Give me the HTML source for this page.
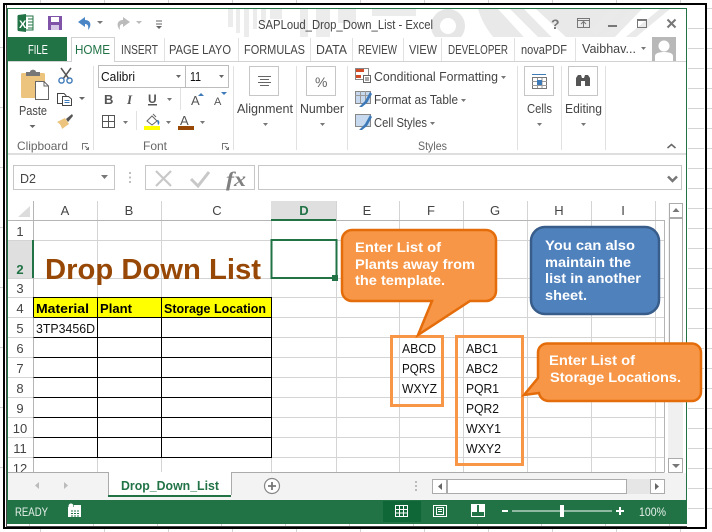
<!DOCTYPE html>
<html><head><meta charset="utf-8"><title>SAPLoud_Drop_Down_List - Excel</title>
<style>
html,body{margin:0;padding:0;background:#fff;width:712px;height:532px;overflow:hidden}
svg{display:block;position:absolute;left:0;top:0}
text{font-family:"Liberation Sans",sans-serif;white-space:pre}
.t{font-size:12.5px;fill:#444}
.r{font-size:12.5px;fill:#444}
.g{font-size:12px;fill:#666}
.c{font-size:13px;fill:#111}
.b{font-size:13px;font-weight:bold;fill:#000}
.h{font-size:13px;fill:#444;text-anchor:middle}
.w{font-size:14px;font-weight:bold;fill:#fff}
</style></head><body>
<svg width="712" height="532" viewBox="0 0 712 532" xmlns="http://www.w3.org/2000/svg" shape-rendering="geometricPrecision">
<rect width="712" height="532" fill="#fff"/>
<!-- background sheet gridlines -->
<g stroke="#d4d4d4" stroke-width="1">
<path d="M40.5 0V3M104.5 0V3M168.5 0V3M232.5 0V3M296.5 0V3M360.5 0V3M424.5 0V3M488.5 0V3M552.5 0V3M616.5 0V3M680.5 0V3"/>
<path d="M40.5 529V532M104.5 529V532M168.5 529V532M232.5 529V532M296.5 529V532M360.5 529V532M424.5 529V532M488.5 529V532M552.5 529V532M616.5 529V532M680.5 529V532"/>
<path d="M29.5 523V527M93.5 523V527M157.5 523V527M221.5 523V527M285.5 523V527M349.5 523V527M413.5 523V527M477.5 523V527M541.5 523V527M605.5 523V527M669.5 523V527"/>
<path d="M688 28.5H704M688 48.5H704M688 68.5H704M688 88.5H704M688 108.5H704M688 128.5H704M688 148.5H704M688 168.5H704M688 188.5H704M688 208.5H704M688 228.5H704M688 248.5H704M688 268.5H704M688 288.5H704M688 308.5H704M688 328.5H704M688 348.5H704M688 368.5H704M688 388.5H704M688 408.5H704M688 428.5H704M688 448.5H704M688 468.5H704M688 488.5H704M688 508.5H704"/>
<path d="M707 8.5H712M707 28.5H712M707 48.5H712M707 68.5H712M707 88.5H712M707 108.5H712M707 128.5H712M707 148.5H712M707 168.5H712M707 188.5H712M707 208.5H712M707 228.5H712M707 248.5H712M707 268.5H712M707 288.5H712M707 308.5H712M707 328.5H712M707 348.5H712M707 368.5H712M707 388.5H712M707 408.5H712M707 428.5H712M707 448.5H712M707 468.5H712M707 488.5H712M707 508.5H712"/>
<path d="M0 47.5H3M0 107.5H3M0 167.5H3M0 227.5H3M0 287.5H3M0 347.5H3M0 407.5H3M0 467.5H3"/>
</g>
<!-- black frame -->
<rect x="4" y="4" width="702" height="524" fill="none" stroke="#000" stroke-width="2"/>
<path d="M706.5 4V529M4 528.5H707" stroke="#000" stroke-width="1" fill="none"/>
<path d="M6.5 5V526.5H687" stroke="#444" stroke-width="1" fill="none"/>
<!-- window -->
<rect x="7.5" y="8.5" width="679" height="515" fill="#fff" stroke="#217346" stroke-width="1"/>
<!-- title watermark -->
<clipPath id="tb"><rect x="8" y="9" width="678" height="28"/></clipPath>
<g clip-path="url(#tb)">
<g fill="#ececec">
<rect x="228" y="9" width="5" height="18"/><rect x="236" y="9" width="4" height="24"/><rect x="244" y="9" width="5" height="28"/><rect x="253" y="9" width="4" height="20"/><rect x="261" y="9" width="5" height="14"/><rect x="270" y="9" width="12" height="10"/>
<rect x="300" y="9" width="8" height="28"/><rect x="316" y="9" width="14" height="28"/><rect x="338" y="9" width="18" height="14"/><rect x="372" y="9" width="44" height="7"/>
</g>
<circle cx="448" cy="26" r="12.500" fill="none" stroke="#e6e6e6" stroke-width="9"/>
<path d="M478 9H632C622 38 586 61 546 61C510 61 486 36 478 9Z" fill="#e9e9e9"/>
<path d="M498 9L546 61H562L510 9ZM524 9L572 58L584 54L536 9Z" fill="#fff"/>
<path d="M590 30L612 9H622L596 36ZM604 36L632 9H642L612 40ZM622 40L660 9H670L630 42Z" fill="#eaeaea"/>
</g>
<!-- QAT -->
<rect x="18" y="16" width="15" height="14" fill="#fff" stroke="#217346"/>
<path d="M18 15L26 14V32L18 31Z" fill="#217346"/>
<text x="19" y="28" style="font-size:11px;font-weight:bold;fill:#fff">X</text>
<path d="M28 19H33M28 22H33M28 25H33M28 28H33" stroke="#217346" stroke-width="1"/>
<path d="M48 16H62V30H48Z" fill="#7f54a8"/><rect x="51" y="17" width="8" height="5" fill="#fff"/><rect x="51" y="25" width="8" height="5" fill="#d8c8e8"/>
<path d="M78 22L85 17V20C91 20 92 26 88 30C89 25 87 24 85 24V27Z" fill="#4a86c6"/>
<path d="M97 21H103L100 24Z" fill="#777"/>
<path d="M130 22L123 17V20C117 20 116 26 120 30C119 25 121 24 123 24V27Z" fill="#bbb"/>
<path d="M136 21H142L139 24Z" fill="#bbb"/>
<path d="M156 21H162M156 24H162" stroke="#666"/><path d="M156 26H162L159 29Z" fill="#666"/>
<text x="258" y="29" class="t" textLength="175" lengthAdjust="spacingAndGlyphs">SAPLoud_Drop_Down_List - Excel</text>
<!-- window controls -->
<text x="551" y="29" style="font-size:14px;font-weight:bold;fill:#777">?</text>
<rect x="577.5" y="18.5" width="12" height="9" fill="none" stroke="#777"/><path d="M578 20.5H589" stroke="#777"/><path d="M583.5 27V22M581 24L583.5 21.5L586 24" fill="none" stroke="#777"/>
<rect x="608" y="25" width="9" height="2" fill="#777"/>
<rect x="637.5" y="19.5" width="9" height="8" fill="none" stroke="#777"/><rect x="637" y="19" width="10" height="2" fill="#777"/>
<path d="M667.5 19.5L675.5 27.5M675.5 19.5L667.5 27.5" stroke="#777" stroke-width="2"/>
<!-- tabs -->
<rect x="7" y="37" width="60" height="25" fill="#217346"/>
<text x="28" y="54" style="font-size:12.500px;fill:#fff" textLength="20" lengthAdjust="spacingAndGlyphs">FILE</text>
<path d="M8 61.5H71.5V37.5H114.5V61.5H686" fill="none" stroke="#d2d2d2"/>
<rect x="72" y="38" width="42" height="25" fill="#fff"/>
<path d="M164.5 38V61M238.5 38V61M310.5 38V61M352.5 38V61M403.5 38V61M441.5 38V61M514.5 38V61M575.5 38V61" stroke="#e1e1e1"/>
<text x="75" y="54" style="font-size:12.500px;fill:#217346" textLength="35" lengthAdjust="spacingAndGlyphs">HOME</text>
<text x="121" y="54" class="t" textLength="37" lengthAdjust="spacingAndGlyphs">INSERT</text>
<text x="169" y="54" class="t" textLength="62" lengthAdjust="spacingAndGlyphs">PAGE LAYO</text>
<text x="244" y="54" class="t" textLength="61" lengthAdjust="spacingAndGlyphs">FORMULAS</text>
<text x="316" y="54" class="t" textLength="31" lengthAdjust="spacingAndGlyphs">DATA</text>
<text x="358" y="54" class="t" textLength="39" lengthAdjust="spacingAndGlyphs">REVIEW</text>
<text x="409" y="54" class="t" textLength="28" lengthAdjust="spacingAndGlyphs">VIEW</text>
<text x="448" y="54" class="t" textLength="60" lengthAdjust="spacingAndGlyphs">DEVELOPER</text>
<text x="521" y="54" class="t" textLength="46" lengthAdjust="spacingAndGlyphs">novaPDF</text>
<text x="582" y="53" class="t" textLength="54" lengthAdjust="spacingAndGlyphs">Vaibhav...</text>
<path d="M641 47H646L643.500 50Z" fill="#777"/>
<rect x="652" y="37" width="24" height="24" fill="#b8b8b8"/>
<circle cx="664" cy="46" r="5.500" fill="#fff"/><path d="M655 61V56C655 53 660 52 664 52C668 52 673 53 673 56V61Z" fill="#fff"/>
<!-- ribbon -->
<path d="M8 154H686" stroke="#d4d4d4" stroke-width="1.500"/>
<path d="M93.500 66V150M233.500 66V150M296.500 66V150M347.500 66V150M517.500 66V150M561.500 66V150M605.500 66V150" stroke="#e1e1e1"/>
<!-- paste -->
<rect x="21" y="73" width="24" height="25" rx="1.500" fill="#ecc47e"/>
<path d="M26 76H40V72H36C36 69 30 69 30 72H26Z" fill="#777"/>
<path d="M35.500 81.500H44L48.500 86V99.500H35.500Z" fill="#fff" stroke="#666"/><path d="M44 82V86H48" fill="none" stroke="#666"/>
<text x="19" y="115" class="r" textLength="28" lengthAdjust="spacingAndGlyphs">Paste</text>
<path d="M29.500 125H35.500L32.500 128Z" fill="#666"/>
<path d="M61 68L69 79M71 68L63 79" stroke="#555" stroke-width="1.500"/><circle cx="61.500" cy="80.500" r="2.600" fill="none" stroke="#3e7ab8" stroke-width="1.400"/><circle cx="69.500" cy="80.500" r="2.600" fill="none" stroke="#3e7ab8" stroke-width="1.400"/>
<path d="M57.500 93.500H64L66 95.500V103.500H57.500Z" fill="#fff" stroke="#444"/><path d="M62.500 96.500H68.500L71.500 99V105.500H62.500Z" fill="#fff" stroke="#444"/><path d="M64.500 100.500H69.500M64.500 102.500H69.500" stroke="#3e7ab8"/>
<path d="M79 97H85L82 100Z" fill="#666"/>
<path d="M57 122L65 118L69 124L62 129C61 125 60 124 57 122Z" fill="#ecc47e"/><path d="M66 119L72 114L73 116L68 122Z" fill="#555"/>
<text x="17" y="150" class="g" textLength="51" lengthAdjust="spacingAndGlyphs">Clipboard</text>
<path d="M82.500 149.500V143.500H88M85 146L88.500 149.500M86 149.500H88.500V147" fill="none" stroke="#777"/>
<!-- font -->
<rect x="98.500" y="65.500" width="130" height="22" fill="#fff" stroke="#bdbdbd"/><path d="M185.500 65V88" stroke="#bdbdbd"/>
<text x="101" y="81" class="c" textLength="34" lengthAdjust="spacingAndGlyphs">Calibri</text>
<text x="190" y="81" class="c" textLength="11" lengthAdjust="spacingAndGlyphs">11</text>
<path d="M176 75H181L178.500 78Z" fill="#666"/><path d="M219 75H224L221.500 78Z" fill="#666"/>
<text x="104" y="104" style="font-size:13px;font-weight:bold;fill:#555">B</text>
<text x="127" y="104" style="font-family:'Liberation Serif',serif;font-size:13px;font-weight:bold;font-style:italic;fill:#555">I</text>
<text x="148" y="103" style="font-size:12px;font-weight:bold;fill:#555">U</text><rect x="148" y="104" width="9" height="1.500" fill="#555"/>
<path d="M167 98H172L169.500 101Z" fill="#777"/>
<path d="M180.500 88V110M136.500 111V130" stroke="#e1e1e1"/>
<text x="191" y="105" style="font-size:13px;fill:#555">A</text><path d="M198 96L201 93L204 96Z" fill="#3e7ab8"/>
<text x="214" y="105" style="font-size:11px;fill:#555">A</text><path d="M221 92H227L224 95Z" fill="#3e7ab8"/>
<rect x="102.500" y="115.500" width="12" height="12" fill="none" stroke="#555"/><path d="M108.500 115V128M102 121.500H115" stroke="#555"/>
<path d="M123 121H128L125.500 124Z" fill="#777"/>
<path d="M147 121L152 116L157 121L152 125Z" fill="#fff" stroke="#666"/><path d="M153 114L156 117" stroke="#666"/><path d="M157 120C160 120 160 124 158 125Z" fill="#3e7ab8"/>
<rect x="144" y="126" width="16" height="4" fill="#ffff00"/>
<path d="M166 121H171L168.500 124Z" fill="#777"/>
<text x="180" y="125" style="font-size:13px;fill:#555">A</text><rect x="178" y="126" width="16" height="4" fill="#974706"/>
<path d="M200 121H205L202.500 124Z" fill="#777"/>
<text x="143" y="150" class="g" textLength="24" lengthAdjust="spacingAndGlyphs">Font</text>
<path d="M222.500 149.500V143.500H228M225 146L228.500 149.500M226 149.500H228.500V147" fill="none" stroke="#777"/>
<!-- alignment / number -->
<rect x="249.500" y="66.500" width="29" height="29" fill="#fff" stroke="#c6c6c6"/>
<path d="M258 76.500H271M260 79.500H269M258 82.500H271M260 85.500H269" stroke="#666"/>
<text x="237" y="113" class="r" textLength="56" lengthAdjust="spacingAndGlyphs">Alignment</text>
<path d="M263 123H268L265.500 126Z" fill="#777"/>
<rect x="306.500" y="66.500" width="29" height="29" fill="#fff" stroke="#c6c6c6"/>
<text x="315" y="87" style="font-size:14px;fill:#666">%</text>
<text x="300" y="113" class="r" textLength="44" lengthAdjust="spacingAndGlyphs">Number</text>
<path d="M320 123H325L322.500 126Z" fill="#777"/>
<!-- styles -->
<rect x="355.500" y="68.500" width="13" height="11" fill="#fff" stroke="#888"/><rect x="356" y="69" width="8" height="3" fill="#d24a26"/><rect x="356" y="75" width="5" height="3" fill="#d24a26"/>
<rect x="363.500" y="75.500" width="7" height="7" fill="#fff" stroke="#666"/><path d="M365 78H369M365 80H369" stroke="#555"/>
<text x="374" y="81" class="t" textLength="124" lengthAdjust="spacingAndGlyphs">Conditional Formatting</text>
<path d="M501 76H506L503.500 79Z" fill="#777"/>
<rect x="355.500" y="91.500" width="15" height="12" fill="#c6d9ee" stroke="#888"/><path d="M355 95.500H371M360.500 91V104M365.500 91V104" stroke="#999"/><path d="M359 107L365 101L370 92L372 94L367 103L362 107Z" fill="#3e7ab8"/>
<text x="374" y="104" class="t" textLength="84" lengthAdjust="spacingAndGlyphs">Format as Table</text>
<path d="M461 99H466L463.500 102Z" fill="#777"/>
<rect x="355.500" y="114.500" width="15" height="12" fill="#c6d9ee" stroke="#888"/><path d="M359 130L365 124L370 115L372 117L367 126L362 130Z" fill="#3e7ab8"/>
<text x="374" y="127" class="t" textLength="53" lengthAdjust="spacingAndGlyphs">Cell Styles</text>
<path d="M430 122H435L432.500 125Z" fill="#777"/>
<text x="418" y="150" class="g" textLength="29" lengthAdjust="spacingAndGlyphs">Styles</text>
<!-- cells/editing -->
<rect x="524.500" y="66.500" width="29" height="29" fill="#fff" stroke="#c6c6c6"/>
<rect x="532.500" y="77.500" width="14" height="11" fill="#fff" stroke="#777"/><path d="M532 81.500H547M532 85.500H547M537.500 78V88M542 78V88" stroke="#999"/><rect x="537" y="80" width="5" height="5" fill="#3e7ab8"/><path d="M532 74.500H546" stroke="#3e7ab8"/>
<text x="527" y="113" class="r" textLength="25" lengthAdjust="spacingAndGlyphs">Cells</text>
<path d="M537 123H542L539.500 126Z" fill="#777"/>
<rect x="568.500" y="66.500" width="29" height="29" fill="#fff" stroke="#c6c6c6"/>
<path d="M576 86V78L578 75H581L582 78H584L585 75H588L590 78V86H585V81H581V86Z" fill="#555"/>
<text x="565" y="113" class="r" textLength="37" lengthAdjust="spacingAndGlyphs">Editing</text>
<path d="M581 123H586L583.500 126Z" fill="#777"/>
<path d="M667.500 148L671.500 144.500L675.500 148" fill="none" stroke="#666" stroke-width="1.500"/>
<!-- formula bar -->
<rect x="13.500" y="165.500" width="101" height="24" fill="#fff" stroke="#c6c6c6"/>
<text x="20" y="183" class="t" textLength="16" lengthAdjust="spacingAndGlyphs">D2</text>
<path d="M101 175H108L104.500 179Z" fill="#777"/>
<path d="M130 172V174M130 176.500V178.500M130 181V183" stroke="#aaa" stroke-width="1.500"/>
<rect x="145.500" y="165.500" width="109" height="24" fill="#fff" stroke="#c6c6c6"/>
<path d="M156 171L171 186M171 171L156 186" stroke="#c8c8c8" stroke-width="2.200"/>
<path d="M191 179L198 186L209 172" fill="none" stroke="#c8c8c8" stroke-width="3"/>
<text x="226" y="186" style="font-family:'Liberation Serif',serif;font-size:21px;font-style:italic;font-weight:bold;fill:#808080" textLength="20" lengthAdjust="spacingAndGlyphs">fx</text>
<rect x="258.500" y="165.500" width="423" height="24" fill="#fff" stroke="#c6c6c6"/>
<path d="M668 176.500L672.500 181L677 176.500" fill="none" stroke="#777" stroke-width="2.500"/>
<!-- grid -->
<rect x="271" y="201" width="65" height="18" fill="#dfdfdf"/>
<rect x="8" y="240" width="25" height="38" fill="#dfdfdf"/>
<g stroke="#d4d4d4">
<path d="M97.500 220V472M161.500 220V472M271.500 220V472M336.500 220V472M399.500 220V472M463.500 220V472M527.500 220V472M591.500 220V472M655.500 220V472"/>
<path d="M8 240.500H664M8 278.500H664M8 297.500H664M8 317.500H664M8 337.500H664M8 357.500H664M8 377.500H664M8 397.500H664M8 417.500H664M8 437.500H664M8 457.500H664"/>
<path d="M97.500 201V220M161.500 201V220M336.500 201V220M399.500 201V220M463.500 201V220M527.500 201V220M591.500 201V220M655.500 201V220"/>
</g>
<path d="M33.500 201V472M8 220.500H664M664.500 220V472" stroke="#b5b5b5" fill="none"/>
<rect x="271" y="219" width="65" height="2" fill="#217346"/>
<rect x="32" y="240" width="2" height="38" fill="#217346"/>
<path d="M18 217H30V206Z" fill="#dcdcdc"/>
<text x="65" y="215" class="h">A</text><text x="129" y="215" class="h">B</text><text x="217" y="215" class="h">C</text>
<text x="304" y="215" style="font-size:13px;font-weight:bold;fill:#217346;text-anchor:middle">D</text>
<text x="367" y="215" class="h">E</text><text x="431" y="215" class="h">F</text><text x="495" y="215" class="h">G</text><text x="559" y="215" class="h">H</text><text x="623" y="215" class="h">I</text>
<text x="20" y="236" class="h">1</text>
<text x="20" y="274" style="font-size:13px;font-weight:bold;fill:#217346;text-anchor:middle">2</text>
<text x="20" y="293" class="h">3</text><text x="20" y="313" class="h">4</text><text x="20" y="333" class="h">5</text><text x="20" y="353" class="h">6</text><text x="20" y="373" class="h">7</text><text x="20" y="393" class="h">8</text><text x="20" y="413" class="h">9</text><text x="20" y="433" class="h">10</text><text x="20" y="453" class="h">11</text>
<clipPath id="rc"><rect x="8" y="457" width="26" height="15"/></clipPath>
<text x="20" y="473" class="h" clip-path="url(#rc)">12</text>
<!-- selected cell -->
<rect x="271.500" y="240" width="65" height="38" fill="#fff" stroke="#217346" stroke-width="2"/>
<rect x="332" y="275" width="6" height="6" fill="#217346"/>
<!-- title in cell -->
<text x="45" y="279" style="font-size:29px;font-weight:bold;fill:#974706" textLength="216" lengthAdjust="spacingAndGlyphs">Drop Down List</text>
<!-- table -->
<rect x="34" y="298" width="237" height="19" fill="#ffff00"/>
<g stroke="#000" fill="none">
<path d="M33.500 297.500H271.500M33.500 317.500H271.500M33.500 337.500H271.500M33.500 357.500H271.500M33.500 377.500H271.500M33.500 397.500H271.500M33.500 417.500H271.500M33.500 437.500H271.500M33.500 457.500H271.500"/>
<path d="M97.500 297V458M161.500 297V458M271.500 297V458M33.500 297V317"/>
</g>
<text x="36" y="313" class="b" textLength="53" lengthAdjust="spacingAndGlyphs">Material</text>
<text x="100" y="313" class="b" textLength="32" lengthAdjust="spacingAndGlyphs">Plant</text>
<text x="164" y="313" class="b" textLength="102" lengthAdjust="spacingAndGlyphs">Storage Location</text>
<text x="36" y="333" class="c" textLength="59" lengthAdjust="spacingAndGlyphs">3TP3456D</text>
<text x="402" y="353" class="c" textLength="34" lengthAdjust="spacingAndGlyphs">ABCD</text>
<text x="402" y="373" class="c" textLength="33" lengthAdjust="spacingAndGlyphs">PQRS</text>
<text x="402" y="393" class="c" textLength="35" lengthAdjust="spacingAndGlyphs">WXYZ</text>
<text x="466" y="353" class="c" textLength="32" lengthAdjust="spacingAndGlyphs">ABC1</text>
<text x="466" y="373" class="c" textLength="32" lengthAdjust="spacingAndGlyphs">ABC2</text>
<text x="466" y="393" class="c" textLength="33" lengthAdjust="spacingAndGlyphs">PQR1</text>
<text x="466" y="413" class="c" textLength="33" lengthAdjust="spacingAndGlyphs">PQR2</text>
<text x="466" y="433" class="c" textLength="35" lengthAdjust="spacingAndGlyphs">WXY1</text>
<text x="466" y="453" class="c" textLength="35" lengthAdjust="spacingAndGlyphs">WXY2</text>
<!-- orange boxes -->
<rect x="391.500" y="336.500" width="51" height="69" fill="none" stroke="#f79646" stroke-width="3"/>
<rect x="456.500" y="336.500" width="66" height="128" fill="none" stroke="#f79646" stroke-width="3"/>
<!-- callout 1 -->
<path d="M352 230H486A10 10 0 0 1 496 240V291A10 10 0 0 1 486 301H470L418 335L432 301H352A10 10 0 0 1 342 291V240A10 10 0 0 1 352 230Z" fill="#f79646" stroke="#e46c0a" stroke-width="2.500"/>
<text x="355" y="252" class="w" textLength="86" lengthAdjust="spacingAndGlyphs">Enter List of</text>
<text x="355" y="269" class="w" textLength="120" lengthAdjust="spacingAndGlyphs">Plants away from</text>
<text x="355" y="285" class="w" textLength="90" lengthAdjust="spacingAndGlyphs">the template.</text>
<!-- blue callout -->
<rect x="531" y="227" width="128" height="87" rx="14" fill="#4f81bd" stroke="#385d8a" stroke-width="2.500"/>
<text x="545" y="250" class="w" textLength="90" lengthAdjust="spacingAndGlyphs">You can also</text>
<text x="545" y="267" class="w" textLength="86" lengthAdjust="spacingAndGlyphs">maintain the</text>
<text x="545" y="283" class="w" textLength="96" lengthAdjust="spacingAndGlyphs">list in another</text>
<text x="545" y="300" class="w" textLength="42" lengthAdjust="spacingAndGlyphs">sheet.</text>
<!-- vertical scrollbar -->
<rect x="668" y="203" width="15" height="269" fill="#f0f0f0"/>
<rect x="669.500" y="218.500" width="13" height="126" fill="#fff" stroke="#ababab"/>
<rect x="668" y="203" width="15" height="15" fill="#f7f7f7"/>
<rect x="669.500" y="203.500" width="13" height="14" fill="#fff" stroke="#ababab"/><path d="M672.500 212H679.500L676 208Z" fill="#777"/>
<rect x="668" y="458" width="15" height="15" fill="#f7f7f7"/>
<rect x="668.500" y="458.500" width="14" height="14" fill="#fff" stroke="#ababab"/><path d="M672 464H680L676 468Z" fill="#777"/>
<!-- callout 3 (sits above the scrollbar) -->
<path d="M547 343.500H692A9 9 0 0 1 701 352.500V392A9 9 0 0 1 692 401H549C544 401 540 398 539 393L524 395L538 378V352.500A9 9 0 0 1 547 343.500Z" fill="#f79646" stroke="#e46c0a" stroke-width="2.500"/>
<text x="549" y="365" class="w" textLength="86" lengthAdjust="spacingAndGlyphs">Enter List of</text>
<text x="550" y="382" class="w" textLength="131" lengthAdjust="spacingAndGlyphs">Storage Locations.</text>
<!-- sheet tabs -->
<rect x="8" y="473" width="678" height="27" fill="#f3f3f3"/>
<path d="M8 472.500H108.500V495M231.500 495V472.500H664.500" fill="none" stroke="#ababab"/>
<rect x="109" y="473" width="122" height="23" fill="#fff"/>
<rect x="108" y="495" width="123" height="2" fill="#217346"/>
<text x="121" y="490" style="font-size:13px;font-weight:bold;fill:#217346" textLength="98" lengthAdjust="spacingAndGlyphs">Drop_Down_List</text>
<path d="M39 482V489L35 485.500Z" fill="#bbb"/><path d="M64 482V489L68 485.500Z" fill="#bbb"/>
<circle cx="272" cy="486" r="7.500" fill="#fff" stroke="#888" stroke-width="1.200"/><path d="M268 486H276M272 482V490" stroke="#777" stroke-width="1.800"/>
<path d="M416 481V483M416 485V487M416 489V491" stroke="#aaa" stroke-width="1.500"/>
<rect x="432" y="479" width="232" height="15" fill="#e6e6e6"/>
<rect x="432.500" y="479.500" width="14" height="14" fill="#fff" stroke="#ababab"/><path d="M442 483V490L438 486.500Z" fill="#666"/>
<rect x="447.500" y="479.500" width="179" height="14" fill="#fff" stroke="#ababab"/>
<rect x="650.500" y="479.500" width="14" height="14" fill="#fff" stroke="#ababab"/><path d="M655 483V490L659 486.500Z" fill="#666"/>
<!-- status bar -->
<rect x="7" y="500" width="680" height="23" fill="#217346"/>
<text x="15" y="516" style="font-size:12px;fill:#e8f0ea" textLength="33" lengthAdjust="spacingAndGlyphs">READY</text>
<circle cx="71" cy="506" r="2.500" fill="#fff"/><rect x="68" y="507" width="13" height="10" fill="#fff"/><rect x="74" y="505" width="7" height="2" fill="#fff"/><path d="M71 511H80M71 513.500H80M71 516H80" stroke="#217346" stroke-dasharray="2 1"/>
<rect x="383" y="501" width="38" height="21" fill="#0f6636"/>
<rect x="395.500" y="505.500" width="12" height="11" fill="none" stroke="#fff"/><path d="M399.500 505V517M403.500 505V517M395 509.500H408M395 513H408" stroke="#fff"/>
<rect x="433.500" y="505.500" width="13" height="11" fill="none" stroke="#fff"/><rect x="436.500" y="507.500" width="7" height="7" fill="none" stroke="#fff"/><path d="M438 509.500H442M438 511.500H442" stroke="#fff"/>
<rect x="471.500" y="504.500" width="13" height="12" fill="none" stroke="#fff"/><rect x="472" y="505" width="5" height="7" fill="#fff"/><rect x="479" y="505" width="5" height="7" fill="#fff"/>
<rect x="502" y="510" width="6" height="2" fill="#fff"/>
<rect x="512" y="510.500" width="100" height="1" fill="#fff"/>
<rect x="560" y="505" width="4" height="12" fill="#fff"/>
<path d="M616 511H624M620 507V515" stroke="#fff" stroke-width="2"/>
<text x="639" y="516" style="font-size:12px;fill:#e8f0ea" textLength="27" lengthAdjust="spacingAndGlyphs">100%</text>
</svg>
</body></html>
